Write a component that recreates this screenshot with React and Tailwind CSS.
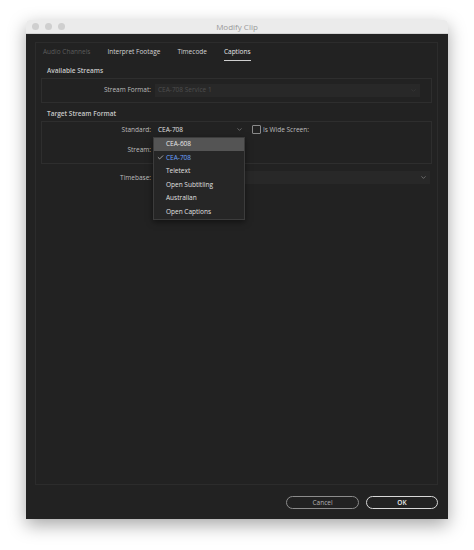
import { Check, ChevronDown } from 'lucide-react';

const font = { fontFamily: '"Open Sans", "Liberation Sans", sans-serif' };

const menuItems = ['CEA-608', 'CEA-708', 'Teletext', 'Open Subtitling', 'Australian', 'Open Captions'];

const Label = ({ children, w }) => (
  <div className={`${w} shrink-0 pr-[4px] text-right text-[6.5px] text-[#bdbdbd]`}>{children}</div>
);

export default function App() {
  return (
    <div className="w-[474px] h-[550px] bg-white pt-[20px] pl-[26px]" style={font}>
      <div className="w-[422px] h-[499px] flex flex-col rounded-t-[4px] overflow-hidden shadow-[0_6px_18px_rgba(0,0,0,0.35)]">
        {/* Title bar */}
        <div className="h-[14px] shrink-0 bg-[#ebebeb] border-b border-[#d4d4d4] flex items-center px-[6px]">
          <div className="flex gap-[6px] w-[40px]">
            <span className="w-[7px] h-[7px] rounded-full bg-[#cfcfcf]" />
            <span className="w-[7px] h-[7px] rounded-full bg-[#cfcfcf]" />
            <span className="w-[7px] h-[7px] rounded-full bg-[#cfcfcf]" />
          </div>
          <div className="flex-1 text-center text-[8px] text-[#9a9a9a]">Modify Clip</div>
          <div className="w-[40px]" />
        </div>

        {/* Body */}
        <div className="flex-1 bg-[#222222] pt-[8px] pl-[9px] pr-[10px] pb-[8px] flex flex-col">
          <div className="h-[443px] border border-[#2c2c2c] flex flex-col">
            {/* Tabs */}
            <div className="h-[18px] flex items-end gap-[17px] pl-[7px] text-[6.5px] font-medium">
              <div className="pb-[4px] text-[#5c5c5c]">Audio Channels</div>
              <div className="pb-[4px] text-[#d4d4d4]">Interpret Footage</div>
              <div className="pb-[4px] text-[#d4d4d4]">Timecode</div>
              <div className="pb-[3px] text-[#e6e6e6] border-b border-[#cfcfcf]">Captions</div>
            </div>

            {/* Available Streams */}
            <div className="pl-[11px] pt-[5px] text-[6.5px] font-semibold text-[#c8c8c8]">Available Streams</div>
            <div className="mx-[5px] mt-[2px] h-[25px] border border-[#2e2e2e] flex items-center">
              <Label w="w-[113px]">Stream Format:</Label>
              <div className="w-[265px] h-[13px] bg-[#282828] flex items-center px-[3px] text-[6.5px] text-[#4e4e4e]">
                <span className="flex-1">CEA-708 Service 1</span>
                <ChevronDown size={7} color="#3e3e3e" />
              </div>
            </div>

            {/* Target Stream Format */}
            <div className="pl-[11px] pt-[6px] text-[6.5px] font-semibold text-[#c8c8c8]">Target Stream Format</div>
            <div className="mx-[5px] mt-[2px] h-[43px] border border-[#2e2e2e] flex flex-col pt-[1px] relative">
              <div className="h-[14px] flex items-center">
                <Label w="w-[113px]">Standard:</Label>
                <div className="w-[91px] h-[13px] flex items-center px-[3px] text-[6.5px] text-[#e0e0e0]">
                  <span className="flex-1">CEA-708</span>
                  <ChevronDown size={7} color="#9a9a9a" />
                </div>
                <div className="ml-[6px] w-[9px] h-[9px] border border-[#8a8a8a] rounded-[1px]" />
                <span className="ml-[2px] text-[6.5px] text-[#bdbdbd]">Is Wide Screen:</span>
              </div>
              <div className="h-[14px] mt-[6px] flex items-center">
                <Label w="w-[113px]">Stream:</Label>
              </div>

              {/* Open menu */}
              <div className="absolute left-[111px] top-[15px] w-[92px] bg-[#262626] border border-[#3c3c3c] shadow-[0_2px_6px_rgba(0,0,0,0.5)] z-10">
                {menuItems.map((item, i) => (
                  <div
                    key={item}
                    className={`h-[13.5px] flex items-center text-[6.5px] ${i === 0 ? 'bg-[#545454] text-[#e8e8e8]' : 'text-[#e0e0e0]'}`}
                  >
                    <span className="w-[12px] flex justify-center">
                      {i === 1 && <Check size={7} color="#d0d0d0" strokeWidth={2.5} />}
                    </span>
                    <span className={i === 1 ? 'text-[#6aa2ff]' : ''}>{item}</span>
                  </div>
                ))}
              </div>
            </div>

            {/* Timebase */}
            <div className="mt-[7px] h-[14px] flex items-center">
              <Label w="w-[119px]">Timebase:</Label>
              <div className="w-[275px] h-[13px] bg-[#282828] flex items-center justify-end px-[3px]">
                <ChevronDown size={7} color="#9a9a9a" />
              </div>
            </div>
          </div>

          {/* Buttons */}
          <div className="mt-[11px] flex justify-end gap-[7px]">
            <button className="w-[73px] h-[13px] rounded-full border border-[#8c8c8c] text-[6.5px] text-[#b0b0b0] flex items-center justify-center">
              Cancel
            </button>
            <button className="w-[72px] h-[13px] rounded-full border border-[#d8d8d8] text-[6.5px] font-semibold text-[#ececec] flex items-center justify-center">
              OK
            </button>
          </div>
        </div>
      </div>
    </div>
  );
}
